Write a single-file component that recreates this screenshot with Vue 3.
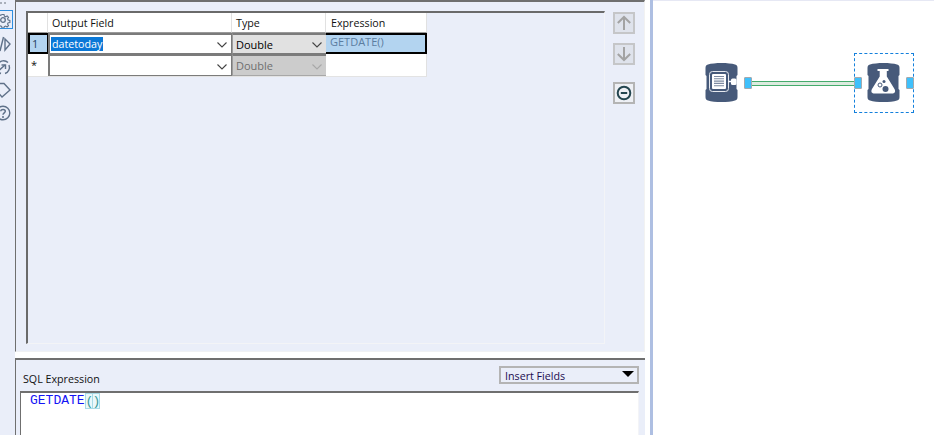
<script setup>
const headers = ['', 'Output Field', 'Type', 'Expression']
</script>

<template>
  <div class="page">
    <div class="left">
      <aside class="rail">
        <div class="dots"><i></i><i></i></div>
        <button class="tool active">
          <svg viewBox="0 0 16 16" width="16" height="16"><g fill="none" stroke="#5f7189" stroke-width="1.3"><circle cx="8" cy="8" r="2.3"/><path d="M6.8 1.5h2.4l.4 2 1.5.7 1.8-1.1 1.6 1.7-1.1 1.7.7 1.6 2 .4v2.4l-2 .4-.7 1.5 1.1 1.8-1.7 1.6-1.7-1.1-1.6.7-.4 1.6H6.800l-.4-1.800-1.500-.7-1.800 1.100-1.600-1.700 1.100-1.700-.7-1.500-1.900-.4V6.800l1.900-.4.7-1.600-1.100-1.800 1.700-1.600 1.700 1.100 1.500-.7z" transform="translate(1.2 1.200) scale(.85)"/></g></svg>
        </button>
        <div class="tool">
          <svg viewBox="0 0 16 16" width="16" height="16"><g fill="none" stroke="#5f7189" stroke-width="1.4"><path d="M8.500 1 5 15"/><path d="M10 3 15 8l-5 6z"/></g></svg>
        </div>
        <div class="tool">
          <svg viewBox="0 0 16 16" width="16" height="16"><g fill="none" stroke="#5f7189" stroke-width="1.400"><path d="M3 5A6.500 6.500 0 0 1 13 3.500"/><path d="M14 6a6.500 6.500 0 0 1-4 8.500"/><path d="M6 14.500A6.500 6.500 0 0 1 1.500 9"/><path d="M4.500 11 10 6"/><path d="M6.500 6H10.500V10"/></g></svg>
        </div>
        <div class="tool">
          <svg viewBox="0 0 16 16" width="16" height="16"><path d="M1 7 7 1.500h7.500V9L8 15z" fill="none" stroke="#5f7189" stroke-width="1.400" transform="rotate(-90 8 8)"/></svg>
        </div>
        <div class="tool">
          <svg viewBox="0 0 16 16" width="16" height="16"><circle cx="8" cy="8" r="6.800" fill="none" stroke="#5f7189" stroke-width="1.400"/><path d="M5.800 6.200C5.800 3.800 10.300 3.800 10.300 6.300 10.300 7.900 8 7.900 8 9.800" fill="none" stroke="#5f7189" stroke-width="1.500"/><circle cx="8" cy="12" r="1" fill="#5f7189"/></svg>
        </div>
      </aside>

      <main class="panels">
        <section class="upper">
          <div class="frame">
            <div class="grid">
              <div v-for="h in headers" :key="h" class="hcell">{{ h }}</div>

              <div class="rowhead sel">1</div>
              <div class="combo">
                <span class="picked">datetoday</span>
                <svg class="chev" viewBox="0 0 10 6" width="10" height="6"><path d="M.5.500 5 5 9.500.500" fill="none" stroke="#444" stroke-width="1.100"/></svg>
              </div>
              <div class="typecell">
                <span>Double</span>
                <svg class="chev" viewBox="0 0 10 6" width="10" height="6"><path d="M.5.500 5 5 9.500.500" fill="none" stroke="#444" stroke-width="1.100"/></svg>
              </div>
              <div class="expr">GETDATE()</div>

              <div class="rowhead star">*</div>
              <div class="combo">
                <svg class="chev" viewBox="0 0 10 6" width="10" height="6"><path d="M.5.500 5 5 9.500.500" fill="none" stroke="#444" stroke-width="1.100"/></svg>
              </div>
              <div class="typecell off">
                <span>Double</span>
                <svg class="chev" viewBox="0 0 10 6" width="10" height="6"><path d="M.5.500 5 5 9.500.500" fill="none" stroke="#a8a8a8" stroke-width="1.100"/></svg>
              </div>
              <div class="blank"></div>
            </div>
          </div>

          <div class="actions">
            <div class="act">
              <svg viewBox="0 0 16 16" width="16" height="16"><path d="M8 15V2M1.800 8 8 2l6.200 6" fill="none" stroke="#a3a3a3" stroke-width="2"/></svg>
            </div>
            <div class="act">
              <svg viewBox="0 0 16 16" width="16" height="16"><path d="M8 1v13M1.800 8 8 14l6.200-6" fill="none" stroke="#a3a3a3" stroke-width="2"/></svg>
            </div>
            <div class="act remove">
              <svg viewBox="0 0 16 16" width="16" height="16"><circle cx="8" cy="8" r="6.300" fill="none" stroke="#23454f" stroke-width="2"/><path d="M4.800 8h6.400" stroke="#23454f" stroke-width="2"/></svg>
            </div>
          </div>
        </section>

        <section class="lower">
          <div class="lowerhead">
            <span class="sqltitle">SQL Expression</span>
            <div class="insert">
              <span>Insert Fields</span>
              <i class="tri"></i>
            </div>
          </div>
          <div class="editor"><span class="kw">GETDATE</span><span class="br">(</span><span class="br">)</span></div>
        </section>
      </main>
    </div>

    <div class="splitter"></div>

    <div class="canvas">
      <svg class="node input" viewBox="0 0 33 39" width="33" height="39">
        <path d="M3 1.500C9 -.5 24 -.5 30 1.500 32 2 32.500 3 32.500 5V12L31.500 13V26L32.500 27V34C32.500 36 32 37 30 37.500 24 39.500 9 39.500 3 37.500 1 37 .5 36 .5 34V27L1.500 26V13L.5 12V5C.5 3 1 2 3 1.500Z" fill="#475a7a"/>
        <rect x="4.500" y="8.500" width="19" height="20" rx="3" fill="none" stroke="#e6e9ef" stroke-width="1"/>
        <rect x="7" y="11" width="14" height="15" rx="1" fill="#fff"/>
        <path d="M9 13.500h10M9 15.800h10M9 18.100h10M9 20.400h10M9 22.700h10" stroke="#7d8aa1" stroke-width="1.100"/>
        <path d="M23.500 18.500h4" stroke="#fff" stroke-width="1.500"/>
        <rect x="26" y="15.500" width="5.500" height="6.500" rx="1.500" fill="#fff"/>
      </svg>
      <div class="anchor a1"></div>
      <div class="wire"></div>
      <div class="selectbox"></div>
      <div class="anchor a2"></div>
      <svg class="node flask" viewBox="0 0 33 39" width="33" height="39">
        <path d="M3 1.500C9 -.5 24 -.5 30 1.500 32 2 32.500 3 32.500 5V12L31.500 13V26L32.500 27V34C32.500 36 32 37 30 37.500 24 39.500 9 39.500 3 37.500 1 37 .5 36 .5 34V27L1.500 26V13L.5 12V5C.5 3 1 2 3 1.500Z" fill="#475a7a"/>
        <path d="M10.500 6H21.500V8H19.800V13.500L27.500 26C29 29 27.500 30.500 25 30.500H7.500C5 30.500 3.500 29 5 26L12.700 13.500V8H10.500Z" fill="#fff"/>
        <circle cx="13" cy="22" r="2" fill="none" stroke="#475a7a" stroke-width="1"/>
        <circle cx="17" cy="18.500" r="1.500" fill="#475a7a"/>
        <circle cx="18.500" cy="26" r="3" fill="#475a7a"/>
      </svg>
      <div class="anchor a3"></div>
    </div>
  </div>
</template>

<style>
html, body { margin: 0; background: #fff; overflow: hidden; }
</style>

<style scoped>
.page {
  width: 934px;
  height: 435px;
  display: flex;
  overflow: hidden;
  font-family: "Open Sans", "Noto Sans", sans-serif;
  font-size: 11px;
  color: #111;
  background: #fff;
}
.left { width: 650px; display: flex; flex: none; background: #fff; }
.rail {
  width: 15px;
  flex: none;
  background: #eaeef9;
  display: flex;
  flex-direction: column;
  align-items: flex-start;
  overflow: hidden;
}
.dots { height: 3px; margin-bottom: 5px; display: flex; gap: 2px; padding-top: 2px; }
.dots i { width: 2px; height: 2px; background: #a9afba; }
.tool {
  width: 13px;
  height: 23px;
  display: flex;
  align-items: center;
  flex: none;
  overflow: hidden;
}
.tool svg { flex: none; margin-left: -5px; }
button.tool {
  height: 19px;
  padding: 0;
  border: 1px solid #2f8fe0;
  border-left: 0;
  background: transparent;
  margin-bottom: 3px;
  box-sizing: border-box;
}
.panels { flex: 1; min-width: 0; display: flex; flex-direction: column; }
.upper {
  height: 352px;
  box-sizing: border-box;
  background: #eaeef9;
  border-top: 2px solid #6f6f6f;
  border-left: 1px solid #6f6f6f;
  border-right: 1px solid #f2f2f2;
  border-bottom: 1px solid #f0f1f3;
  padding: 9px 40px 6px 10px;
  display: flex;
  gap: 8px;
  width: 630px;
}
.frame {
  width: 579px;
  height: 333px;
  box-sizing: border-box;
  border-top: 2px solid #6a6a6a;
  border-left: 2px solid #6a6a6a;
  border-right: 1px solid #f3f4f7;
  border-bottom: 1px solid #f3f4f7;
  flex: none;
}
.grid {
  display: grid;
  grid-template-columns: 20px 184px 94px 101px;
  grid-template-rows: 20px 21px 22px;
  width: max-content;
  background: #fff;
  border-bottom: 1px solid #e3e3e3;
}
.hcell {
  padding-left: 4px;
  line-height: 20px;
  background: #fff;
  border-right: 1px solid #e1e1e1;
  border-bottom: 1px solid #9a9a9a;
  font-size: 10.7px;
}
.hcell:nth-child(4) { padding-left: 5px; }
.rowhead { padding-left: 3px; line-height: 20px; background: #fff; }
.rowhead.sel {
  background: #b3d4f0;
  box-sizing: border-box;
  border: 2px solid #000;
  border-right-width: 1px;
  padding-left: 2px;
  color: #24405f;
  line-height: 17px;
}
.rowhead.star { font-size: 11px; line-height: 22px; }
.combo {
  position: relative;
  background: #fff;
  box-sizing: border-box;
  border: 1px solid #7b7b7b;
  border-left-width: 2px;
  border-top-width: 2px;
  display: flex;
  align-items: center;
  padding-left: 1px;
}
.picked {
  background: #0a78d7;
  color: #fff;
  font-size: 10.7px;
  line-height: 14px;
  padding: 0 1px;
}
.chev { position: absolute; right: 4px; top: 50%; margin-top: -2px; }
.typecell {
  position: relative;
  background: #e1e1e1;
  box-sizing: border-box;
  border-top: 2px solid #7b7b7b;
  border-bottom: 1px solid #7b7b7b;
  border-left: 1px solid #9c9c9c;
  display: flex;
  align-items: center;
  padding-left: 3px;
  color: #000;
}
.typecell.off {
  background: #ccc;
  color: #6f6f6f;
  border-bottom: 1px solid #a8a8a8;
}
.expr {
  background: #b3d4f0;
  color: #5b7da0;
  border: 2px solid #000;
  border-left: 0;
  box-sizing: border-box;
  padding-left: 4px;
  line-height: 14px;
}
.blank { background: #fff; border-right: 1px solid #e1e1e1; box-sizing: border-box; }
.actions {
  width: 22px;
  flex: none;
  display: flex;
  flex-direction: column;
  margin-top: 1px;
}
.act {
  width: 22px;
  height: 22px;
  box-sizing: border-box;
  border: 2px solid #c5c6c8;
  background: #dfe3ec;
  display: flex;
  align-items: center;
  justify-content: center;
  margin-bottom: 9px;
}
.act.remove { background: #eef0f5; border-color: #b4b4b4; margin-top: 8px; }
.lower {
  margin-top: 6px;
  flex: 1;
  width: 630px;
  box-sizing: border-box;
  background: #eaeef9;
  border-top: 2px solid #6f6f6f;
  border-left: 1px solid #6f6f6f;
  padding: 7px 6px 0 4px;
  display: flex;
  flex-direction: column;
}
.lowerhead { height: 24px; display: flex; justify-content: space-between; align-items: flex-start; }
.sqltitle { margin: 4px 0 0 3px; line-height: 16px; font-size: 10.7px; }
.insert {
  width: 140px;
  height: 18px;
  box-sizing: border-box;
  border: 2px solid #b4b4b4;
  display: flex;
  align-items: center;
  justify-content: space-between;
  padding: 2px 3px 0 4px;
  color: #1c0b50;
  font-size: 10.7px;
  margin-top: -1px;
}
.tri {
  width: 0;
  height: 0;
  border-left: 6px solid transparent;
  border-right: 6px solid transparent;
  border-top: 6px solid #000;
  margin-top: -4px;
}
.editor {
  flex: 1;
  background: #fff;
  border-top: 2px solid #6f6f6f;
  border-left: 1px solid #6f6f6f;
  border-right: 1px solid #f3f4f7;
  padding: 0 0 0 9px;
  font-family: "Liberation Mono", monospace;
  font-size: 13px;
  line-height: 16px;
  display: flex;
  align-items: flex-start;
}
.kw { color: #1414f5; }
.br {
  width: 8px;
  height: 16px;
  box-sizing: border-box;
  background: #eaf8fb;
  border: 1px solid #a9dbe6;
  color: #3a9a9a;
  line-height: 15px;
  text-align: center;
  margin-right: -1px;
  overflow: hidden;
}
.splitter { width: 3px; flex: none; background: #aebfe2; }
.canvas { flex: 1; position: relative; background: #fff; border-top: 1px solid #e6e8f4; }
.node { position: absolute; filter: blur(.35px); }
.input { left: 52px; top: 62px; }
.flask { left: 214px; top: 62px; }
.anchor {
  position: absolute;
  width: 8px;
  height: 12px;
  box-sizing: border-box;
  background: #3fc0fb;
  border: 1px solid #a3a9ae;
  border-radius: 1px;
}
.a1 { left: 91px; top: 76px; }
.a2 { left: 201px; top: 76px; }
.a3 { left: 253px; top: 76px; }
.wire {
  position: absolute;
  left: 99px;
  top: 80px;
  width: 102px;
  height: 5px;
  box-sizing: border-box;
  background: #dcebdf;
  border-top: 1px solid #45ab6c;
  border-bottom: 1px solid #45ab6c;
}
.selectbox {
  position: absolute;
  left: 201px;
  top: 52px;
  width: 60px;
  height: 60px;
  box-sizing: border-box;
  border: 1px dashed #1480dc;
}
</style>
